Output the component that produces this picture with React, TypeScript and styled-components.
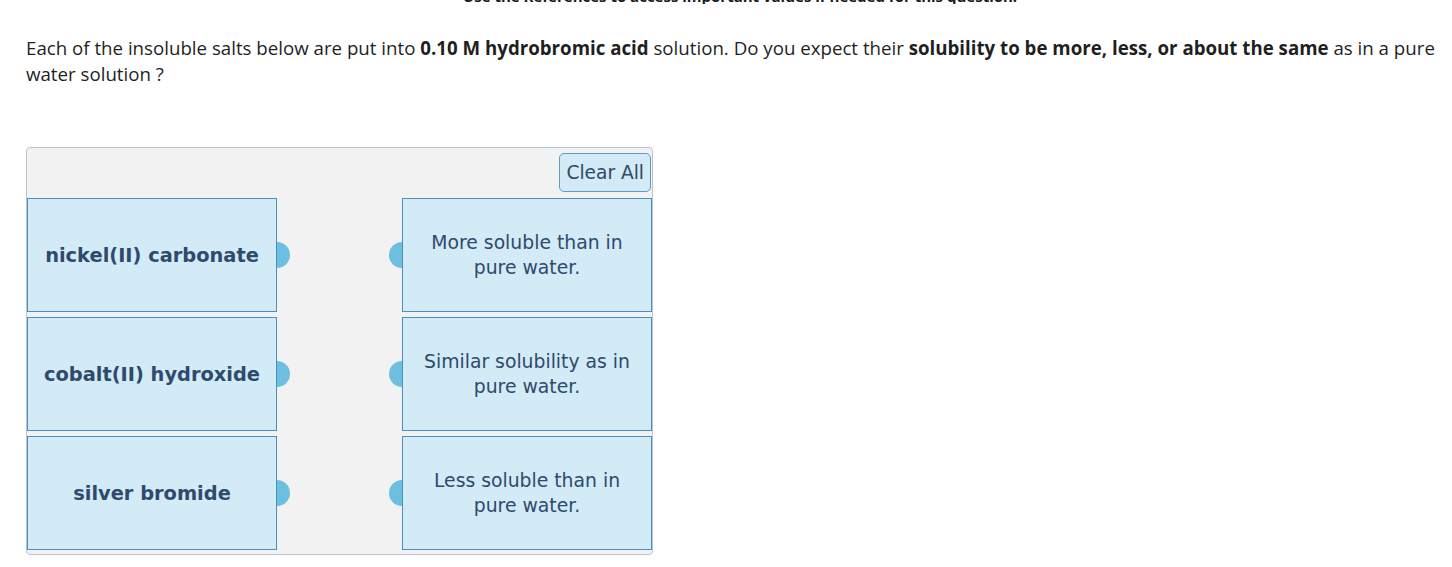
import styled, { createGlobalStyle } from 'styled-components'

const GlobalStyle = createGlobalStyle`
  body {
    margin: 0;
    background: #ffffff;
    font-family: "Open Sans", "Liberation Sans", sans-serif;
    color: #1a1a1a;
  }
`

const Page = styled.div`
  padding: 0 8px 0 26px;
  overflow: hidden;
`

const RefNote = styled.p`
  margin: -14px 0 0 0;
  height: 18px;
  overflow: hidden;
  text-align: center;
  font-weight: bold;
  font-size: 15px;
  line-height: 20px;
  padding-left: 10px;
`

const Question = styled.p`
  margin: 31px 0 0 0;
  font-size: 18.7px;
  line-height: 26px;
  color: #1f1f1f;
`

const Strong = styled.strong`
  font-weight: bold;
`

const Panel = styled.div`
  margin-top: 60px;
  width: 625px;
  border: 1px solid #bcc3cb;
  border-radius: 4px;
  background: #f2f2f2;
  padding: 5px 0 4px 0;
  font-family: "DejaVu Sans", Verdana, sans-serif;
`

const Toolbar = styled.div`
  display: flex;
  justify-content: flex-end;
  padding-right: 1px;
  margin-bottom: 6px;
`

const ClearButton = styled.button`
  height: 39px;
  padding: 0 6px;
  font-family: "DejaVu Sans", Verdana, sans-serif;
  font-size: 18.6px;
  color: #2e4a68;
  background: #d3eaf7;
  border: 1px solid #5b9cc2;
  border-radius: 5px;
`

const Rows = styled.div`
  display: flex;
  flex-direction: column;
  gap: 5px;
`

const Row = styled.div`
  display: flex;
  justify-content: space-between;
`

const Card = styled.div<{ $bold?: boolean }>`
  position: relative;
  box-sizing: border-box;
  width: 250px;
  height: 114px;
  display: flex;
  align-items: center;
  justify-content: center;
  text-align: center;
  background: #d3eaf7;
  border: 1px solid #4d8fbc;
  color: #2e4a6c;
  font-size: ${p => (p.$bold ? '19.4px' : '18.8px')};
  font-weight: ${p => (p.$bold ? 'bold' : 'normal')};
  line-height: 25px;
  padding: 0 14px;
`

const Knob = styled.span<{ $side: 'left' | 'right' }>`
  position: absolute;
  top: 50%;
  width: 26px;
  height: 26px;
  margin-top: -13px;
  border-radius: 50%;
  background: #6dbfe0;
  ${p =>
    p.$side === 'left'
      ? 'right: -14px; clip-path: inset(0 0 0 50%);'
      : 'left: -14px; clip-path: inset(0 50% 0 0);'}
`

const salts = ['nickel(II) carbonate', 'cobalt(II) hydroxide', 'silver bromide']
const answers = [
  'More soluble than in pure water.',
  'Similar solubility as in pure water.',
  'Less soluble than in pure water.',
]

export default function App() {
  return (
    <Page>
      <GlobalStyle />
      <RefNote>Use the References to access important values if needed for this question.</RefNote>
      <Question>
        Each of the insoluble salts below are put into <Strong>0.10 M hydrobromic acid</Strong> solution. Do you expect
        their <Strong>solubility to be more, less, or about the same</Strong> as in a pure water solution ?
      </Question>
      <Panel>
        <Toolbar>
          <ClearButton>Clear All</ClearButton>
        </Toolbar>
        <Rows>
          {salts.map((s, i) => (
            <Row key={s}>
              <Card $bold>
                {s}
                <Knob $side="left" />
              </Card>
              <Card>
                {answers[i]}
                <Knob $side="right" />
              </Card>
            </Row>
          ))}
        </Rows>
      </Panel>
    </Page>
  )
}
